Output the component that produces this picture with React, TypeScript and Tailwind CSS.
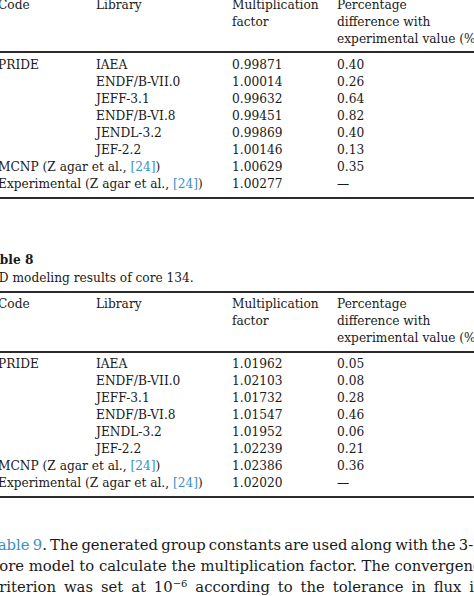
import React from 'react';

const rows1 = [
  ['PRIDE', 'IAEA', '0.99871', '0.40'],
  ['', 'ENDF/B-VII.0', '1.00014', '0.26'],
  ['', 'JEFF-3.1', '0.99632', '0.64'],
  ['', 'ENDF/B-VI.8', '0.99451', '0.82'],
  ['', 'JENDL-3.2', '0.99869', '0.40'],
  ['', 'JEF-2.2', '1.00146', '0.13'],
];
const rows2 = [
  ['PRIDE', 'IAEA', '1.01962', '0.05'],
  ['', 'ENDF/B-VII.0', '1.02103', '0.08'],
  ['', 'JEFF-3.1', '1.01732', '0.28'],
  ['', 'ENDF/B-VI.8', '1.01547', '0.46'],
  ['', 'JENDL-3.2', '1.01952', '0.06'],
  ['', 'JEF-2.2', '1.02239', '0.21'],
];

const Ref = () => <span className="text-[#3b8fc9]">[24]</span>;

function Table({ rows, mcnp, exp }: { rows: string[][]; mcnp: string[]; exp: string }) {
  return (
    <div>
      <div className="grid grid-cols-[98px_136px_105px_1fr] leading-[17px] whitespace-nowrap">
        <div>Code</div>
        <div>Library</div>
        <div>Multiplication<br />factor</div>
        <div>Percentage<br />difference with<br />experimental value (%)</div>
      </div>
      <div className="border-t-2 border-[#2b2b2b] mt-[3.5px] mb-[3.5px]" />
      <div className="grid grid-cols-[98px_136px_105px_1fr] leading-[17px] whitespace-nowrap">
        {rows.map((r, i) => (
          <React.Fragment key={i}>
            <div>{r[0]}</div>
            <div>{r[1]}</div>
            <div>{r[2]}</div>
            <div>{r[3]}</div>
          </React.Fragment>
        ))}
        <div className="col-span-2">MCNP (Z agar et al., <Ref />)</div>
        <div>{mcnp[0]}</div>
        <div>{mcnp[1]}</div>
        <div className="col-span-2">Experimental (Z agar et al., <Ref />)</div>
        <div>{exp}</div>
        <div>—</div>
      </div>
      <div className="border-t-2 border-[#2b2b2b] mt-[4px]" />
    </div>
  );
}

export default function App() {
  return (
    <div className="w-[474px] h-[596px] overflow-hidden bg-white text-[#1a1a1a] text-[12.2px] font-['DejaVu_Serif',serif]">
      <div className="ml-[-2px] mt-[-3.5px]">
        <Table rows={rows1} mcnp={['1.00629', '0.35']} exp="1.00277" />

        <div className="mt-[52px] ml-[-14px] leading-[18px]">
          <div className="font-bold">Table 8</div>
          <div className="ml-[3px]">3-D modeling results of core 134.</div>
        </div>
        <div className="border-t-2 border-[#2b2b2b] mt-[4px] mb-[3.5px]" />
        <Table rows={rows2} mcnp={['1.02386', '0.36']} exp="1.02020" />
      </div>

      <div className="mt-[36px] ml-[-9px] text-[14.8px] leading-[21px] whitespace-nowrap">
        <div className="ml-[-2px] [word-spacing:-1.5px]"><span className="text-[#3b8fc9]">Table 9</span>. The generated group constants are used along with the 3-D</div>
        <div>core model to calculate the multiplication factor. The convergence</div>
        <div className="w-[489px] text-justify [text-align-last:justify] whitespace-normal">
          criterion was set at 10<sup className="text-[10px]">−6</sup> according to the tolerance in flux it
        </div>
      </div>
    </div>
  );
}
